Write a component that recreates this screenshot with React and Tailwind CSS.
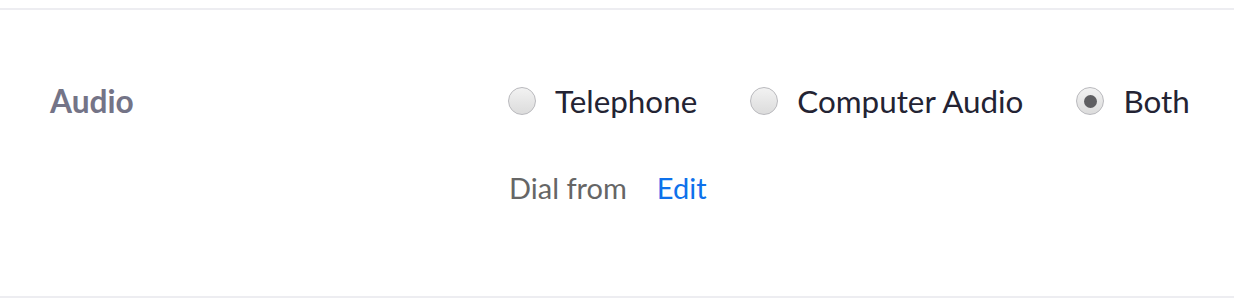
import React from "react";

function Radio({ checked }) {
  return (
    <span className="relative inline-flex h-[28px] w-[28px] shrink-0 items-center justify-center rounded-full border border-[#b9b9bd] bg-gradient-to-b from-[#f2f2f2] to-[#dcdcdc]">
      {checked && <span className="h-[13px] w-[13px] rounded-full bg-[#5f5f62]" />}
    </span>
  );
}

export default function App() {
  const opts = [
    { label: "Telephone", checked: false },
    { label: "Computer Audio", checked: false },
    { label: "Both", checked: true },
  ];
  return (
    <div className="h-[308px] w-[1234px] bg-white pt-[8px]" style={{ fontFamily: "Lato, 'Open Sans', sans-serif" }}>
      <div className="flex h-[290px] border-y-2 border-[#ededf1]">
        <div className="w-[508px] shrink-0 pl-[50px] pt-[73px] text-[31.7px] font-bold leading-[36px] text-[#747487]">
          Audio
        </div>
        <div className="flex flex-col pt-[73px]">
          <div className="flex items-center">
            {opts.map((o, i) => (
              <label key={o.label} className={"flex items-center " + (i > 0 ? "ml-[53px]" : "")}>
                <Radio checked={o.checked} />
                <span className="ml-[19px] text-[31.4px] leading-[36px] text-[#232333]">{o.label}</span>
              </label>
            ))}
          </div>
          <div className="mt-[53px] flex items-center text-[29px] leading-[32px]">
            <span className="ml-[1px] text-[#666666]">Dial from</span>
            <span className="ml-[30px] text-[#0e71eb]">Edit</span>
          </div>
        </div>
      </div>
    </div>
  );
}
